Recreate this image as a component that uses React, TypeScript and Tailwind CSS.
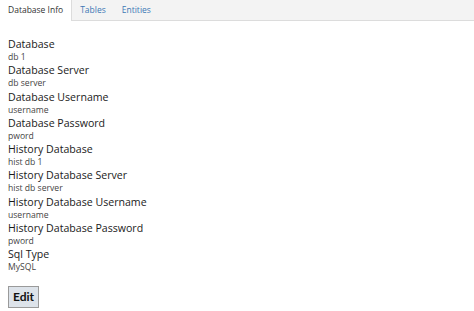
const fields: [string, string][] = [
  ["Database", "db 1"],
  ["Database Server", "db server"],
  ["Database Username", "username"],
  ["Database Password", "pword"],
  ["History Database", "hist db 1"],
  ["History Database Server", "hist db server"],
  ["History Database Username", "username"],
  ["History Database Password", "pword"],
  ["Sql Type", "MySQL"],
];

export default function App() {
  return (
    <div className="h-[311px] w-[474px] overflow-hidden bg-white font-['Open_Sans',sans-serif]">
      <div className="flex h-[21px] border-b border-[#dcdcdc] bg-[#f3f3f3] text-[8.5px] leading-[20px]">
        <div className="-mb-px border-r border-[#dcdcdc] bg-white px-2 text-[#333]">Database Info</div>
        <div className="px-2 text-[#3b78b5]">Tables</div>
        <div className="px-2 text-[#3b78b5]">Entities</div>
      </div>

      <div className="px-2 pt-[16px]">
        {fields.map(([label, value]) => (
          <div key={label}>
            <div className="text-[10.6px] font-medium leading-[15px] text-[#1a1a1a]">{label}</div>
            <div className="text-[8.6px] leading-[11.25px] text-[#444]">{value}</div>
          </div>
        ))}
        <button
          type="button"
          className="mt-[13px] h-[22px] w-[31px] border border-[#9a9a9a] bg-[#dde3ea] font-['Lato',sans-serif] text-[12px] font-bold text-[#111]"
        >
          Edit
        </button>
      </div>
    </div>
  );
}
